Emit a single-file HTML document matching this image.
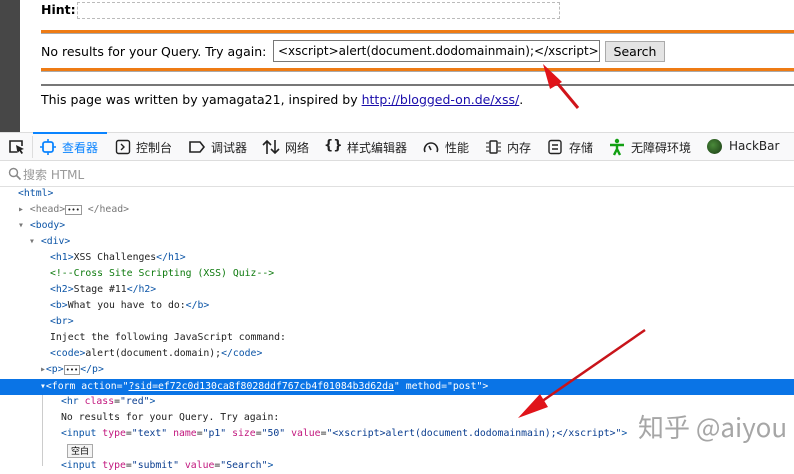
<!DOCTYPE html>
<html><head><meta charset="utf-8"><style>
body{margin:0;width:794px;height:466px;overflow:hidden;background:#fff;position:relative;font-family:"Liberation Sans","Noto Sans CJK SC",sans-serif;}
.a{position:absolute;}
.t{font-size:12.5px;color:#000;white-space:nowrap;font-family:"DejaVu Sans","Noto Sans CJK SC",sans-serif;}
.tb{font-size:12px;color:#222;white-space:nowrap;font-family:"DejaVu Sans","Noto Sans CJK SC",sans-serif;}
.m{position:absolute;font-family:"DejaVu Sans Mono",monospace;font-size:9.8px;white-space:pre;color:#222;line-height:16px;height:16px;}
.g{color:#0e7a0e}.b{color:#0b54a6}.p{color:#c2187e}.s{color:#0a3d8f}.gr{color:#777}
</style></head><body>
<div class="a" style="left:0;top:0;width:20px;height:132px;background:#474747"></div>
<div class="a t" style="left:41px;top:2px;font-weight:bold">Hint:</div>
<div class="a" style="left:77px;top:2px;width:481px;height:15px;border:1px dashed #bbb"></div>
<div class="a" style="left:41px;top:30px;width:753px;height:3px;background:#ee7b14;border-bottom:1px solid #aaa"></div>
<div class="a t" style="left:41px;top:44px">No results for your Query. Try again:</div>
<div class="a" style="left:273px;top:40px;border:1px solid #777;font-size:12px;line-height:20px;font-family:'DejaVu Sans',sans-serif;white-space:nowrap;overflow:hidden;padding-left:4px;box-sizing:border-box;width:327px;height:22px">&lt;xscript&gt;alert(document.dodomainmain);&lt;/xscript&gt;</div>
<div class="a" style="left:605px;top:41px;width:58px;height:19px;background:#e4e4e4;border:1px solid #aaa;font-size:12.5px;line-height:19px;text-align:center;font-family:'DejaVu Sans',sans-serif">Search</div>
<div class="a" style="left:41px;top:68px;width:753px;height:3px;background:#ee7b14;border-bottom:1px solid #aaa"></div>
<div class="a" style="left:41px;top:84px;width:753px;height:2px;background:#777"></div>
<div class="a t" style="left:41px;top:92px">This page was written by yamagata21, inspired by <span style="color:#1a0dab;text-decoration:underline">http://blogged-on.de/xss/</span>.</div>
<!-- devtools -->
<div class="a" style="left:0;top:132px;width:794px;height:29px;background:#f9f9fa;border-top:1px solid #ddd;border-bottom:1px solid #ddd;box-sizing:border-box"></div>
<div class="a" style="left:33px;top:132px;width:74px;height:2px;background:#0a84ff"></div>
<div class="a" style="left:32px;top:136px;width:1px;height:22px;background:#ddd"></div>
<svg class="a" style="left:8px;top:139px" width="18" height="16"><path d="M9 13H2V2h12v5" fill="none" stroke="#222" stroke-width="1.6"/><path d="M8 6l8 4-3 1 2 3-1.5 1-2-3-2 2z" fill="#222"/></svg>
<svg class="a" style="left:40px;top:139px" width="16" height="16"><rect x="3" y="3" width="10" height="10" rx="2" fill="none" stroke="#0a84ff" stroke-width="1.8"/><path d="M8 0v3M8 13v3M0 8h3M13 8h3" stroke="#0a84ff" stroke-width="1.6"/></svg>
<div class="a tb" style="left:62px;top:139px;color:#0a84ff">查看器</div>
<svg class="a" style="left:115px;top:139px" width="16" height="16"><rect x="1.5" y="1.5" width="13" height="13" rx="2" fill="none" stroke="#222" stroke-width="1.4"/><path d="M6 5l3 3-3 3" fill="none" stroke="#222" stroke-width="1.4"/></svg>
<div class="a tb" style="left:136px;top:139px">控制台</div>
<svg class="a" style="left:188px;top:139px" width="18" height="16"><path d="M2 3h10l4 5-4 5H2z" fill="none" stroke="#222" stroke-width="1.6"/></svg>
<div class="a tb" style="left:211px;top:139px">调试器</div>
<svg class="a" style="left:262px;top:139px" width="18" height="16"><path d="M5 15V2M1 6l4-4 4 4M13 1v13M9 10l4 4 4-4" fill="none" stroke="#222" stroke-width="1.6"/></svg>
<div class="a tb" style="left:285px;top:139px">网络</div>
<div class="a tb" style="left:324px;top:138px;font-weight:bold;font-size:13px">{}</div>
<div class="a tb" style="left:347px;top:139px">样式编辑器</div>
<svg class="a" style="left:422px;top:139px" width="18" height="16"><path d="M3 13A6.5 6.5 0 1 1 15 13" fill="none" stroke="#222" stroke-width="1.6"/><path d="M9 11l-2-4" stroke="#222" stroke-width="1.6"/></svg>
<div class="a tb" style="left:445px;top:139px">性能</div>
<svg class="a" style="left:484px;top:139px" width="18" height="16"><rect x="6" y="2" width="7" height="12" rx="1" fill="none" stroke="#222" stroke-width="1.5"/><path d="M2 4h3M2 8h3M2 12h3M14 4h3M14 8h3M14 12h3" stroke="#222"/></svg>
<div class="a tb" style="left:507px;top:139px">内存</div>
<svg class="a" style="left:547px;top:139px" width="16" height="16"><rect x="2" y="1.5" width="12" height="13" rx="2" fill="none" stroke="#222" stroke-width="1.4"/><path d="M5 6h6M5 10h6" stroke="#222" stroke-width="1.4"/></svg>
<div class="a tb" style="left:569px;top:139px">存储</div>
<svg class="a" style="left:609px;top:138px" width="16" height="18"><circle cx="8" cy="3" r="2.2" fill="#12a012"/><path d="M1 7h14M8 6v5M5 17l3-6 3 6" fill="none" stroke="#12a012" stroke-width="2.4"/></svg>
<div class="a tb" style="left:631px;top:139px">无障碍环境</div>
<div class="a" style="left:707px;top:139px;width:15px;height:15px;border-radius:50%;background:radial-gradient(circle at 40% 40%,#4a8a3a,#1a3a14)"></div>
<div class="a tb" style="left:729px;top:139px">HackBar</div>
<div class="a" style="left:0;top:186px;width:794px;height:1px;background:#e0e0e0"></div>
<svg class="a" style="left:8px;top:167px" width="14" height="14"><circle cx="5.5" cy="5.5" r="4" fill="none" stroke="#888" stroke-width="1.4"/><path d="M8.5 8.5l4 4" stroke="#888" stroke-width="1.6"/></svg>
<div class="a tb" style="left:23px;top:166px;color:#999">搜索 HTML</div>
<!-- tree -->
<div class="m" style="left:18px;top:186px"><span class="b">&lt;html&gt;</span></div>
<div class="m" style="left:18px;top:202px"><span class="gr">▸ &lt;head&gt;</span><span style="border:1px solid #999;font-size:7px;padding:0 1px">•••</span><span class="gr"> &lt;/head&gt;</span></div>
<div class="m" style="left:18px;top:218px"><span class="gr">▾</span> <span class="b">&lt;body&gt;</span></div>
<div class="m" style="left:29px;top:234px"><span class="gr">▾</span> <span class="b">&lt;div&gt;</span></div>
<div class="m" style="left:50px;top:250px"><span class="b">&lt;h1&gt;</span>XSS Challenges<span class="b">&lt;/h1&gt;</span></div>
<div class="m g" style="left:50px;top:266px">&lt;!--Cross Site Scripting (XSS) Quiz--&gt;</div>
<div class="m" style="left:50px;top:282px"><span class="b">&lt;h2&gt;</span>Stage #11<span class="b">&lt;/h2&gt;</span></div>
<div class="m" style="left:50px;top:298px"><span class="b">&lt;b&gt;</span>What you have to do:<span class="b">&lt;/b&gt;</span></div>
<div class="m" style="left:50px;top:314px"><span class="b">&lt;br&gt;</span></div>
<div class="m" style="left:50px;top:330px">Inject the following JavaScript command:</div>
<div class="m" style="left:50px;top:346px"><span class="b">&lt;code&gt;</span>alert(document.domain);<span class="b">&lt;/code&gt;</span></div>
<div class="m" style="left:40px;top:362px"><span class="gr">▸</span><span class="b">&lt;p&gt;</span><span style="border:1px solid #999;font-size:7px;padding:0 1px">•••</span><span class="b">&lt;/p&gt;</span></div>
<div class="a" style="left:0;top:379px;width:794px;height:16px;background:#0a74e6"></div>
<div class="m" style="left:40px;top:379px;color:#fff">▾&lt;form action="<span style="text-decoration:underline">?sid=ef72c0d130ca8f8028ddf767cb4f01084b3d62da</span>" method="post"&gt;</div>
<div class="a" style="left:42px;top:395px;width:1px;height:71px;background:#ccc"></div>
<div class="m" style="left:61px;top:394px"><span class="b">&lt;hr</span> <span class="p">class</span>=<span class="s">"red"</span><span class="b">&gt;</span></div>
<div class="m" style="left:61px;top:410px">No results for your Query. Try again:</div>
<div class="m" style="left:61px;top:426px"><span class="b">&lt;input</span> <span class="p">type</span>=<span class="s">"text"</span> <span class="p">name</span>=<span class="s">"p1"</span> <span class="p">size</span>=<span class="s">"50"</span> <span class="p">value</span>=<span class="s">"&lt;xscript&gt;alert(document.dodomainmain);&lt;/xscript&gt;"</span><span class="b">&gt;</span></div>
<div class="a" style="left:67px;top:444px;width:24px;height:12px;border:1px solid #aaa;background:#f4f4f4;font-size:9px;line-height:12px;text-align:center;font-family:'Noto Sans CJK SC',sans-serif">空白</div>
<div class="m" style="left:61px;top:458px"><span class="b">&lt;input</span> <span class="p">type</span>=<span class="s">"submit"</span> <span class="p">value</span>=<span class="s">"Search"</span><span class="b">&gt;</span></div>
<div class="a" style="left:638px;top:412px;font-size:26px;color:rgba(150,150,150,.85);font-family:'Noto Sans CJK SC',sans-serif;white-space:nowrap;line-height:30px">知乎 @aiyou</div>
<svg class="a" style="left:0;top:0" width="794" height="466"><path d="M578 108L553 78" stroke="#d0141a" stroke-width="3"/><path d="M543 64L562 82L550 89Z" fill="#e0141a"/><path d="M645 330L538 404" stroke="#c8141a" stroke-width="2.5"/><path d="M518 418L540 394L548 407Z" fill="#e0141a"/></svg>
</body></html>
